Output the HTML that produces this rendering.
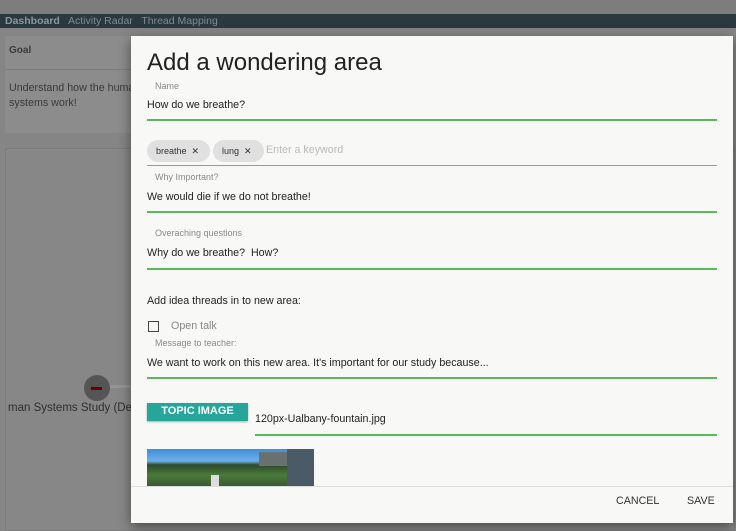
<!DOCTYPE html>
<html><head><style>
*{margin:0;padding:0;box-sizing:border-box}
body{width:736px;height:531px;overflow:hidden;background:#858585;font-family:"Liberation Sans",Arial,sans-serif;position:relative}
.a{position:absolute}
.lbl{position:absolute;font-size:9px;color:#8a8a8a;left:24px}
.val{position:absolute;font-size:10.7px;color:#222;left:16px}
.line{position:absolute;left:16px;width:570px;height:2px;background:#5cb85c}
</style></head><body>
<div class="a" style="left:0;top:0;width:736px;height:14px;background:#7d7d7d"></div>
<div class="a" style="left:0;top:14px;width:736px;height:14px;background:#2a393f;color:#7f8c92;font-size:10.5px;line-height:14px;padding-left:5px;white-space:nowrap"><b style="color:#8a979d;font-weight:bold">Dashboard</b>&nbsp;&nbsp; Activity Radar&nbsp;&nbsp; Thread Mapping</div>
<div class="a" style="left:5px;top:36px;width:490px;height:97px;background:#8c8c8c"></div>
<div class="a" style="left:5px;top:69px;width:490px;height:1px;background:#7a7a7a"></div>
<div class="a" style="left:9px;top:45px;font-size:10px;font-weight:bold;color:#3a3a3a">Goal</div>
<div class="a" style="left:9px;top:81px;font-size:10.7px;color:#3a3a3a;line-height:15px">Understand how the human<br>systems work!</div>
<div class="a" style="left:5px;top:148px;width:730px;height:383px;border:1px solid #7b7b7b;background:#878787"></div>
<div class="a" style="left:100px;top:385px;width:40px;height:3px;background:#959595"></div>
<div class="a" style="left:84px;top:375px;width:26px;height:26px;border-radius:50%;background:#555"></div>
<div class="a" style="left:91px;top:387px;width:11px;height:3px;background:#6a0000"></div>
<div class="a" style="left:8px;top:402px;font-size:11.5px;color:#2e2e2e;white-space:nowrap">man Systems Study (De</div>

<div class="a" style="left:131px;top:36px;width:602px;height:487px;background:#f8f8f7;box-shadow:0 4px 12px rgba(0,0,0,.45)">
  <div class="a" style="left:16px;top:13px;font-size:24px;color:#222">Add a wondering area</div>
  <div class="lbl" style="top:45px">Name</div>
  <div class="val" style="top:63px">How do we breathe?</div>
  <div class="line" style="top:83px"></div>
  <div class="a" style="left:16px;top:104px;height:22px;width:63px;border-radius:11px;background:#e0e0e0;font-size:9px;color:#333;line-height:22px;padding-left:9px">breathe &nbsp;✕</div>
  <div class="a" style="left:82px;top:104px;height:22px;width:51px;border-radius:11px;background:#e0e0e0;font-size:9px;color:#333;line-height:22px;padding-left:9px">lung &nbsp;✕</div>
  <div class="a" style="left:135px;top:108px;font-size:10.7px;color:#bbb">Enter a keyword</div>
  <div class="a" style="left:16px;top:129px;width:570px;height:1px;background:#999"></div>
  <div class="lbl" style="top:136px">Why Important?</div>
  <div class="val" style="top:155px">We would die if we do not breathe!</div>
  <div class="line" style="top:175px"></div>
  <div class="lbl" style="top:192px">Overaching questions</div>
  <div class="val" style="top:211px">Why do we breathe?&nbsp; How?</div>
  <div class="line" style="top:232px"></div>
  <div class="val" style="top:259px">Add idea threads in to new area:</div>
  <div class="a" style="left:17px;top:285px;width:11px;height:11px;border:1px solid #444"></div>
  <div class="a" style="left:40px;top:284px;font-size:10.7px;color:#888">Open talk</div>
  <div class="lbl" style="top:302px">Message to teacher:</div>
  <div class="val" style="top:321px">We want to work on this new area. It's important for our study because...</div>
  <div class="line" style="top:341px"></div>
  <div class="a" style="left:16px;top:367px;width:101px;height:18px;background:#26a69a;color:#fff;font-size:11px;font-weight:bold;text-align:center;line-height:16px;box-shadow:0 1px 2px rgba(0,0,0,.3)">TOPIC IMAGE</div>
  <div class="a" style="left:124px;top:377px;font-size:10.7px;color:#222">120px-Ualbany-fountain.jpg</div>
  <div class="a" style="left:124px;top:398px;width:462px;height:2px;background:#5cb85c"></div>
  <div class="a" style="left:16px;top:413px;width:167px;height:37px;overflow:hidden;background:linear-gradient(#3d8fd8 0,#6fb0e8 12px,#2f4a2a 16px,#4a7a3a 26px,#3b5a33 37px)">
    <div class="a" style="left:140px;top:0;width:27px;height:37px;background:#4a5a66"></div>
    <div class="a" style="left:112px;top:3px;width:28px;height:14px;background:#6a7070"></div>
    <div class="a" style="left:64px;top:26px;width:8px;height:11px;background:#ddd"></div>
  </div>
  <div class="a" style="left:0;top:450px;width:602px;height:1px;background:#ddd"></div>
  <div class="a" style="left:485px;top:459px;font-size:10.7px;color:#333">CANCEL</div>
  <div class="a" style="left:556px;top:459px;font-size:10.7px;color:#333">SAVE</div>
</div>
</body></html>
